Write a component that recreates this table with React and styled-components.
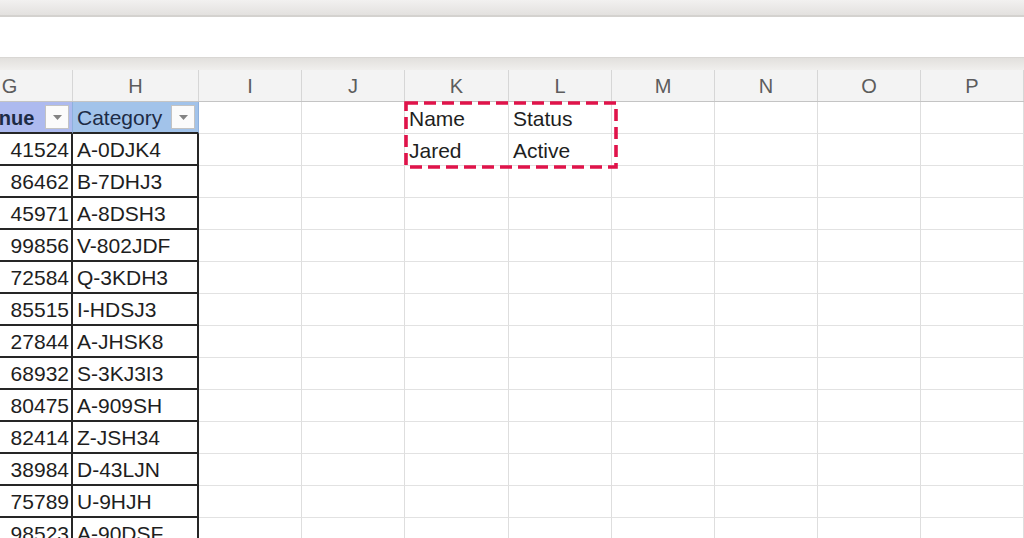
import React from 'react';
import styled, { createGlobalStyle } from 'styled-components';

const GlobalStyle = createGlobalStyle`
  html, body { margin: 0; padding: 0; background: #fff; overflow: hidden; }
  body { font-family: "Liberation Sans", Arial, sans-serif; }
`;

const columns = [
  { key: 'G', width: 126 },
  { key: 'H', width: 126 },
  { key: 'I', width: 103 },
  { key: 'J', width: 103 },
  { key: 'K', width: 104 },
  { key: 'L', width: 103 },
  { key: 'M', width: 103 },
  { key: 'N', width: 103 },
  { key: 'O', width: 103 },
  { key: 'P', width: 103 },
];

const data = [
  ['41524', 'A-0DJK4'],
  ['86462', 'B-7DHJ3'],
  ['45971', 'A-8DSH3'],
  ['99856', 'V-802JDF'],
  ['72584', 'Q-3KDH3'],
  ['85515', 'I-HDSJ3'],
  ['27844', 'A-JHSK8'],
  ['68932', 'S-3KJ3I3'],
  ['80475', 'A-909SH'],
  ['82414', 'Z-JSH34'],
  ['38984', 'D-43LJN'],
  ['75789', 'U-9HJH'],
  ['98523', 'A-90DSF'],
];

const side = { 0: ['Name', 'Status'], 1: ['Jared', 'Active'] };

const Page = styled.div`
  width: 1024px;
  height: 538px;
  overflow: hidden;
  display: flex;
  flex-direction: column;
  background: #fff;
`;

const RibbonEdge = styled.div`
  height: 15px;
  flex: none;
  background: linear-gradient(#f2f1f0, #e3e1df);
  border-bottom: 2px solid #d4d2cf;
`;

const FormulaArea = styled.div`
  height: 40px;
  flex: none;
  background: #fff;
`;

const Divider = styled.div`
  height: 12px;
  flex: none;
  background: linear-gradient(#e2e0dd, #f0efed);
  border-top: 1px solid #d9d7d4;
`;

const Sheet = styled.div`
  flex: 1;
  overflow: hidden;
`;

const Grid = styled.div`
  margin-left: -53px;
  display: flex;
  flex-direction: column;
`;

const HeaderRow = styled.div`
  display: flex;
  height: 32px;
  background: #f3f3f3;
  border-bottom: 1px solid #c4c4c4;
  box-sizing: border-box;
`;

const ColLetter = styled.div`
  flex: none;
  width: ${p => p.$w}px;
  box-sizing: border-box;
  border-right: 1px solid #d6d6d6;
  display: flex;
  align-items: center;
  justify-content: center;
  padding-top: 1px;
  color: #5c5c5c;
  font-size: 20px;
`;

const Row = styled.div`
  display: flex;
  height: 32px;
`;

const Cell = styled.div`
  position: relative;
  flex: none;
  width: ${p => p.$w}px;
  height: 32px;
  box-sizing: border-box;
  border-right: ${p => (p.$table ? '2px solid #262626' : '1px solid #dedede')};
  border-bottom: ${p => (p.$table ? '2px solid #262626' : '1px solid #e2e2e2')};
  display: flex;
  align-items: center;
  justify-content: ${p => (p.$right ? 'flex-end' : 'flex-start')};
  padding: 2px ${p => (p.$right ? '2px' : '0')} 0 ${p => (p.$right ? '0' : '4px')};
  font-size: 21px;
  color: #1e1e1e;
  white-space: nowrap;
`;

const TableHead = styled.div`
  flex: none;
  width: ${p => p.$w}px;
  height: 32px;
  box-sizing: border-box;
  background: ${p => p.$bg};
  border-right: 1px solid #8fb0dc;
  border-bottom: 2px solid #262626;
  display: flex;
  align-items: center;
  gap: 3px;
  padding: 2px 3px 0 4px;
  font-size: ${p => (p.$bold ? 20 : 21)}px;
  font-weight: ${p => (p.$bold ? 700 : 400)};
  color: #1d2b45;
  white-space: nowrap;
`;

const HeadLabel = styled.span`
  flex: 1;
  overflow: hidden;
`;

const FilterButton = styled.div`
  flex: none;
  width: 24px;
  height: 24px;
  margin-top: -2px;
  box-sizing: border-box;
  background: #fbfbfb;
  border: 1px solid #c3c3c3;
  display: flex;
  align-items: center;
  justify-content: center;
`;

const Marquee = styled.svg`
  position: absolute;
  left: -1px;
  top: -1px;
  width: 214px;
  height: 68px;
  pointer-events: none;
  z-index: 2;
`;

function Filter() {
  return (
    <FilterButton>
      <svg width="11" height="7" viewBox="0 0 11 7">
        <path d="M1 1h9L5.5 6z" fill="#838383" />
      </svg>
    </FilterButton>
  );
}

function CopyMarquee() {
  return (
    <Marquee viewBox="0 0 214 68">
      <rect x="2" y="2" width="210" height="64" fill="none" stroke="#e0134a" strokeWidth="3.6" strokeDasharray="12 6" />
    </Marquee>
  );
}

export default function App() {
  const rest = columns.slice(2);
  return (
    <Page>
      <GlobalStyle />
      <RibbonEdge />
      <FormulaArea />
      <Divider />
      <Sheet>
        <Grid>
          <HeaderRow>
            {columns.map(c => (
              <ColLetter key={c.key} $w={c.width}>{c.key}</ColLetter>
            ))}
          </HeaderRow>

          <Row>
            <TableHead $w={126} $bg="#adbaef" $bold>
              <HeadLabel>Revenue</HeadLabel>
              <Filter />
            </TableHead>
            <TableHead $w={126} $bg="#a2c3ea">
              <HeadLabel>Category</HeadLabel>
              <Filter />
            </TableHead>
            {rest.map(c => (
              <Cell key={c.key} $w={c.width}>
                {c.key === 'K' && <CopyMarquee />}
                {c.key === 'K' && side[0][0]}
                {c.key === 'L' && side[0][1]}
              </Cell>
            ))}
          </Row>

          {data.map((d, i) => (
            <Row key={d[0]}>
              <Cell $w={126} $table $right>{d[0]}</Cell>
              <Cell $w={126} $table>{d[1]}</Cell>
              {rest.map(c => (
                <Cell key={c.key} $w={c.width}>
                  {side[i + 1] && c.key === 'K' && side[i + 1][0]}
                  {side[i + 1] && c.key === 'L' && side[i + 1][1]}
                </Cell>
              ))}
            </Row>
          ))}
        </Grid>
      </Sheet>
    </Page>
  );
}
